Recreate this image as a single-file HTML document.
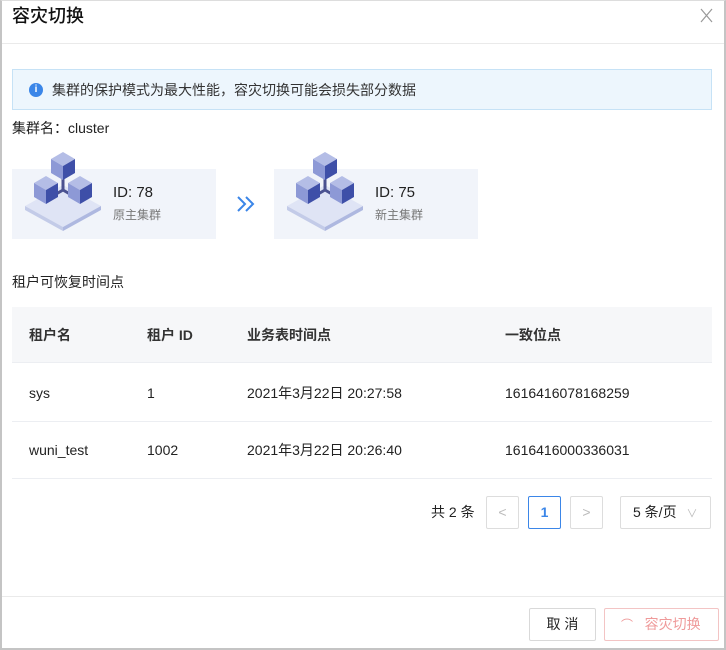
<!DOCTYPE html>
<html><head><meta charset="utf-8"><style>
*{margin:0;padding:0;box-sizing:border-box}
body{width:726px;height:650px;background:#fff;font-family:"Liberation Sans","Noto Sans CJK SC",sans-serif;color:#222;position:relative;overflow:hidden;font-size:14px;line-height:20px}
.a{position:absolute;white-space:nowrap}
</style></head><body>
<div class="a" style="left:0;top:0;width:726px;height:650px;border:2px solid #c4c4c4;border-top:1px solid #ddd"></div>
<div class="a" style="left:12px;top:4px;font-size:18px;line-height:24px;font-weight:500;color:#111">容灾切换</div>
<svg class="a" style="left:700px;top:8px" width="13" height="15"><path d="M1,1 L12,14 M12,1 L1,14" stroke="#999" stroke-width="1.2"/></svg>
<div class="a" style="left:2px;top:43px;width:722px;height:1px;background:#eaeaea"></div>
<div class="a" style="left:12px;top:69px;width:700px;height:41px;background:#edf6fd;border:1px solid #c6e2f6"></div>
<div class="a" style="left:29px;top:83px;width:14px;height:14px;border-radius:50%;background:#3b86e8;color:#fff;font-size:10px;text-align:center;line-height:14px;font-weight:bold">i</div>
<div class="a" style="left:52px;top:80px;color:#333">集群的保护模式为最大性能，容灾切换可能会损失部分数据</div>
<div class="a" style="left:12px;top:118px;color:#222">集群名：cluster</div>

<div class="a" style="left:12px;top:169px;width:204px;height:70px;background:#f1f4fa"></div>
<div class="a" style="left:274px;top:169px;width:204px;height:70px;background:#f1f4fa"></div>
<svg class="a" style="left:22px;top:150px" width="86" height="86" viewBox="0 0 86 86">
<g id="cube">
<polygon points="3,56 41,35 79,56 41,77" fill="#dfe4f5"/>
<polygon points="3,56 41,77 41,81 3,60" fill="#c3cbe8"/>
<polygon points="41,77 79,56 79,60 41,81" fill="#aeb8e0"/>
<path d="M41,26 L41,40 M41,40 L29,47 M41,40 L53,47" stroke="#4a5190" stroke-width="3"/>
<polygon points="29,9 41,2 53,9 41,16" fill="#b4bde6"/><polygon points="29,9 41,16 41,30 29,23" fill="#8d99d6"/><polygon points="41,16 53,9 53,23 41,30" fill="#3e4fa8"/>
<polygon points="12,33 24,26 36,33 24,40" fill="#b4bde6"/><polygon points="12,33 24,40 24,54 12,47" fill="#8d99d6"/><polygon points="24,40 36,33 36,47 24,54" fill="#3e4fa8"/>
<polygon points="46,33 58,26 70,33 58,40" fill="#b4bde6"/><polygon points="46,33 58,40 58,54 46,47" fill="#8d99d6"/><polygon points="58,40 70,33 70,47 58,54" fill="#3e4fa8"/>
</g></svg>
<svg class="a" style="left:284px;top:150px" width="86" height="86" viewBox="0 0 86 86"><use href="#cube"/></svg>
<div class="a" style="left:113px;top:183px;font-size:15px;color:#222">ID: 78</div>
<div class="a" style="left:113px;top:205px;font-size:12px;color:#777">原主集群</div>
<div class="a" style="left:375px;top:183px;font-size:15px;color:#222">ID: 75</div>
<div class="a" style="left:375px;top:205px;font-size:12px;color:#777">新主集群</div>
<svg class="a" style="left:235px;top:194px" width="22" height="20"><path d="M3,3 L10,10 L3,17 M11,3 L18,10 L11,17" stroke="#3b86e8" stroke-width="2" fill="none"/></svg>

<div class="a" style="left:12px;top:272px">租户可恢复时间点</div>
<div class="a" style="left:12px;top:307px;width:700px;height:56px;background:#f6f7f9;border-bottom:1px solid #eceef2"></div>
<div class="a" style="left:12px;top:421px;width:700px;height:1px;background:#eceef2"></div>
<div class="a" style="left:12px;top:478px;width:700px;height:1px;background:#eceef2"></div>
<div class="a" style="left:29px;top:325px;font-weight:bold;color:#333">租户名</div>
<div class="a" style="left:147px;top:325px;font-weight:bold;color:#333">租户 ID</div>
<div class="a" style="left:247px;top:325px;font-weight:bold;color:#333">业务表时间点</div>
<div class="a" style="left:505px;top:325px;font-weight:bold;color:#333">一致位点</div>
<div class="a" style="left:29px;top:383px">sys</div>
<div class="a" style="left:147px;top:383px">1</div>
<div class="a" style="left:247px;top:383px">2021年3月22日 20:27:58</div>
<div class="a" style="left:505px;top:383px">1616416078168259</div>
<div class="a" style="left:29px;top:440px">wuni_test</div>
<div class="a" style="left:147px;top:440px">1002</div>
<div class="a" style="left:247px;top:440px">2021年3月22日 20:26:40</div>
<div class="a" style="left:505px;top:440px">1616416000336031</div>

<div class="a" style="left:431px;top:502px">共 2 条</div>
<div class="a" style="left:486px;top:496px;width:33px;height:33px;border:1px solid #ddd;border-radius:2px;color:#bbb;text-align:center;line-height:31px">&lt;</div>
<div class="a" style="left:528px;top:496px;width:33px;height:33px;border:1px solid #3b86e8;border-radius:2px;color:#3b86e8;text-align:center;line-height:31px;font-weight:bold">1</div>
<div class="a" style="left:570px;top:496px;width:33px;height:33px;border:1px solid #ddd;border-radius:2px;color:#bbb;text-align:center;line-height:31px">&gt;</div>
<div class="a" style="left:620px;top:496px;width:91px;height:33px;border:1px solid #ddd;border-radius:2px;line-height:31px;padding-left:12px">5 条/页 <span style="color:#bbb;font-size:11px;margin-left:6px">∨</span></div>

<div class="a" style="left:2px;top:596px;width:722px;height:1px;background:#eaeaea"></div>
<div class="a" style="left:529px;top:608px;width:67px;height:33px;border:1px solid #d9d9d9;border-radius:2px;text-align:center;line-height:31px;color:#222">取 消</div>
<div class="a" style="left:604px;top:608px;width:115px;height:33px;border:1px solid #f3c4c4;border-radius:2px;line-height:31px;color:#ef9a9a;padding-left:16px"><span style="font-size:12px">⌒</span>&nbsp;&nbsp; 容灾切换</div>
</body></html>
